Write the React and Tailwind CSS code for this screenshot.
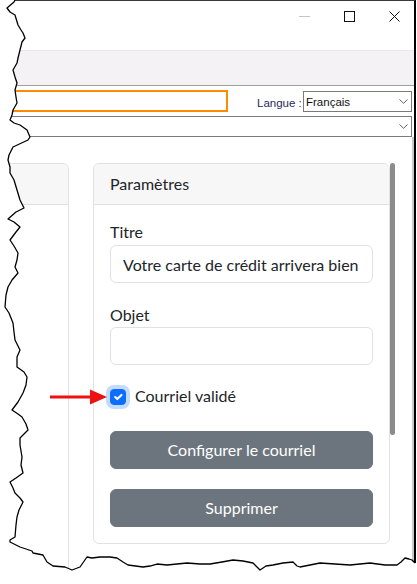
import React from "react";

const EDGE = [
  [15, 0], [14, 2], [7, 8], [10, 12], [15, 15], [18, 25], [21, 30], [23, 33], [25, 38], [22, 42],
  [20, 50], [18, 58], [17, 63], [13, 70], [15, 77], [17, 83], [15, 90], [16, 97], [17, 103], [13, 110],
  [12, 115], [10, 120], [14, 123], [20, 125], [27, 130], [30, 137], [28, 140], [13, 147], [9, 155],
  [8, 160], [10, 167], [10, 173], [14, 180], [17, 190], [20, 200], [24, 208], [16, 212], [8, 219],
  [14, 222], [20, 227], [16, 232], [10, 240], [14, 246], [18, 253], [17, 260], [15, 267], [18, 273],
  [12, 280], [8, 287], [6, 295], [5, 307], [9, 313], [13, 323], [14, 332], [15, 340], [20, 350],
  [17, 357], [17, 367], [24, 372], [27, 377], [26, 385], [23, 393], [18, 402], [12, 410], [18, 414],
  [22, 417], [26, 424], [28, 430], [24, 434], [20, 438], [20, 445], [22, 457], [21, 465], [23, 473],
  [16, 478], [10, 482], [13, 488], [15, 493], [20, 498], [23, 502], [19, 510], [17, 517], [16, 525],
  [15, 537], [10, 540], [10, 542], [20, 547], [32, 551], [33, 553], [43, 555], [47, 562], [53, 566],
  [65, 567], [72, 570], [80, 567], [87, 557], [92, 558], [100, 557], [110, 557], [117, 558],
  [123, 562], [128, 565], [143, 567], [150, 566], [157, 564], [167, 565], [187, 563], [200, 564],
  [210, 564], [222, 562], [233, 560], [243, 561], [253, 563], [258, 568], [260, 570], [266, 566],
  [273, 565], [283, 563], [293, 562], [297, 566], [300, 567], [310, 565], [320, 563], [335, 564],
  [350, 565], [360, 564], [370, 563], [385, 565], [397, 565], [401, 562], [405, 558], [409, 559],
  [412, 560], [415, 563],
];

const edgeStr = EDGE.map((p) => p.join(",")).join(" ");
const outside = `0,0 ${edgeStr} 417,563 417,584 0,584`;

function Chevron() {
  return (
    <svg width="9" height="5" viewBox="0 0 9 5" className="shrink-0">
      <polyline points="0.5,0.5 4.5,4.3 8.5,0.5" fill="none" stroke="#606060" strokeWidth="1" />
    </svg>
  );
}

export default function App() {
  const boot = "[font-family:Lato,'Noto_Sans',sans-serif]";
  const win = "[font-family:'Liberation_Sans',Arial,sans-serif]";
  return (
    <div className="relative w-[417px] h-[584px] bg-white overflow-hidden">
      <div className="w-[416px] h-[584px] border-t border-r-2 border-t-[#3a3a3a] border-r-black flex flex-col bg-white">
        {/* Title bar */}
        <div className="h-[49px] shrink-0 flex justify-end items-start pt-[10px] pr-[14px] gap-[34px]">
          <svg width="11" height="11" viewBox="0 0 11 11">
            <line x1="0" y1="5.5" x2="11" y2="5.5" stroke="#c4c4c4" strokeWidth="1" />
          </svg>
          <svg width="11" height="11" viewBox="0 0 11 11">
            <rect x="0.5" y="0.5" width="10" height="10" fill="none" stroke="#111" strokeWidth="1" />
          </svg>
          <svg width="11" height="11" viewBox="0 0 11 11">
            <line x1="0.5" y1="0.5" x2="10.5" y2="10.5" stroke="#111" strokeWidth="1" />
            <line x1="10.5" y1="0.5" x2="0.5" y2="10.5" stroke="#111" strokeWidth="1" />
          </svg>
        </div>
        {/* Band */}
        <div className="h-[36px] shrink-0 bg-[#f5f2f6] border-t border-t-[#ece8ef] border-b border-b-[#a0a0a0]" />
        {/* Row 1 */}
        <div className={`h-[30px] shrink-0 flex items-start pt-[4px] pl-[4px] pr-[2px] ${win}`}>
          <div className="w-[224px] h-[22px] border-2 border-[#ff8c00] bg-white shrink-0" />
          <span className="ml-[29px] mt-[6px] text-[11.5px] leading-[14px] text-[#1f2a5c]">Langue :</span>
          <div className="ml-auto mt-[1px] w-[109px] h-[21px] border border-[#7a7a7a] flex items-center pl-[2px] pr-[3px] bg-white">
            <span className="flex-1 text-[11.5px] leading-[14px] text-[#111]">Français</span>
            <Chevron />
          </div>
        </div>
        {/* Row 2 */}
        <div className="h-[21px] shrink-0 pl-[4px] pr-[2px]">
          <div className="h-[21px] border border-[#7a7a7a] flex items-center justify-end pr-[3px] bg-white">
            <Chevron />
          </div>
        </div>
        {/* Content */}
        <div className={`flex-1 min-h-0 border-r-2 border-[#c8c8c8] overflow-hidden flex justify-end items-start pt-[26px] pr-[17px] ${boot}`}>
          <div className="w-[100px] h-[600px] shrink-0 border border-[#dee2e6] rounded-[6px] bg-white">
            <div className="h-[41px] bg-[#f7f7f7] border-b border-[#dee2e6] rounded-t-[6px]" />
          </div>
          <div className="ml-[24px] w-[297px] shrink-0 border border-[#dee2e6] rounded-[6px] bg-white text-[#212529]">
            <div className="h-[41px] px-4 py-2 bg-[#f7f7f7] border-b border-[#dee2e6] rounded-t-[6px] text-[16px] leading-6">
              Paramètres
            </div>
            <div className="px-4 pt-[15px] pb-[16px] flex flex-col">
              <label className="text-[16px] leading-6">Titre</label>
              <input
                readOnly
                value="Votre carte de crédit arrivera bien"
                className={`mt-[1px] w-full h-[38px] border border-[#dee2e6] rounded-[6px] px-3 py-[6px] text-[16px] leading-6 text-[#212529] bg-white outline-none ${boot}`}
              />
              <label className="mt-[20px] text-[16px] leading-6">Objet</label>
              <input
                readOnly
                value=""
                className={`mt-0 w-full h-[38px] border border-[#dee2e6] rounded-[6px] px-3 py-[6px] text-[16px] leading-6 bg-white outline-none ${boot}`}
              />
              <div className="mt-[19px] flex items-start">
                <div className="mt-[5px] w-[16px] h-[16px] shrink-0 rounded-[4px] bg-[#0d6efd] border border-[#0d6efd] shadow-[0_0_0_4px_rgba(13,110,253,0.25)] flex items-center justify-center">
                  <svg width="14" height="14" viewBox="0 0 20 20">
                    <path d="m6 10 3 3 6-6" fill="none" stroke="#fff" strokeWidth="3" strokeLinecap="round" strokeLinejoin="round" />
                  </svg>
                </div>
                <span className="ml-[9px] text-[16px] leading-6">Courriel validé</span>
              </div>
              <button className="mt-[23px] h-[38px] w-full rounded-[6px] bg-[#6c757d] border border-[#6c757d] text-white text-[16px] leading-6">
                Configurer le courriel
              </button>
              <button className="mt-[20px] h-[38px] w-full rounded-[6px] bg-[#6c757d] border border-[#6c757d] text-white text-[16px] leading-6">
                Supprimer
              </button>
            </div>
          </div>
          <div className="w-[5px] h-[272px] shrink-0 rounded-full bg-[#8b8b8b]" />
        </div>
      </div>

      {/* Red annotation arrow */}
      <svg className="absolute left-[48px] top-[388px]" width="62" height="18" viewBox="0 0 62 18">
        <line x1="2" y1="9" x2="44" y2="9" stroke="#ee1111" strokeWidth="3" />
        <polygon points="42,1.5 59,9 42,16.5" fill="#ee1111" />
      </svg>

      {/* Torn edge overlay */}
      <svg className="absolute left-0 top-0 pointer-events-none" width="417" height="584" viewBox="0 0 417 584">
        <polygon points={outside} fill="#fff" />
        <polyline points={edgeStr} fill="none" stroke="#000" strokeWidth="1.3" strokeLinejoin="round" />
      </svg>
    </div>
  );
}
